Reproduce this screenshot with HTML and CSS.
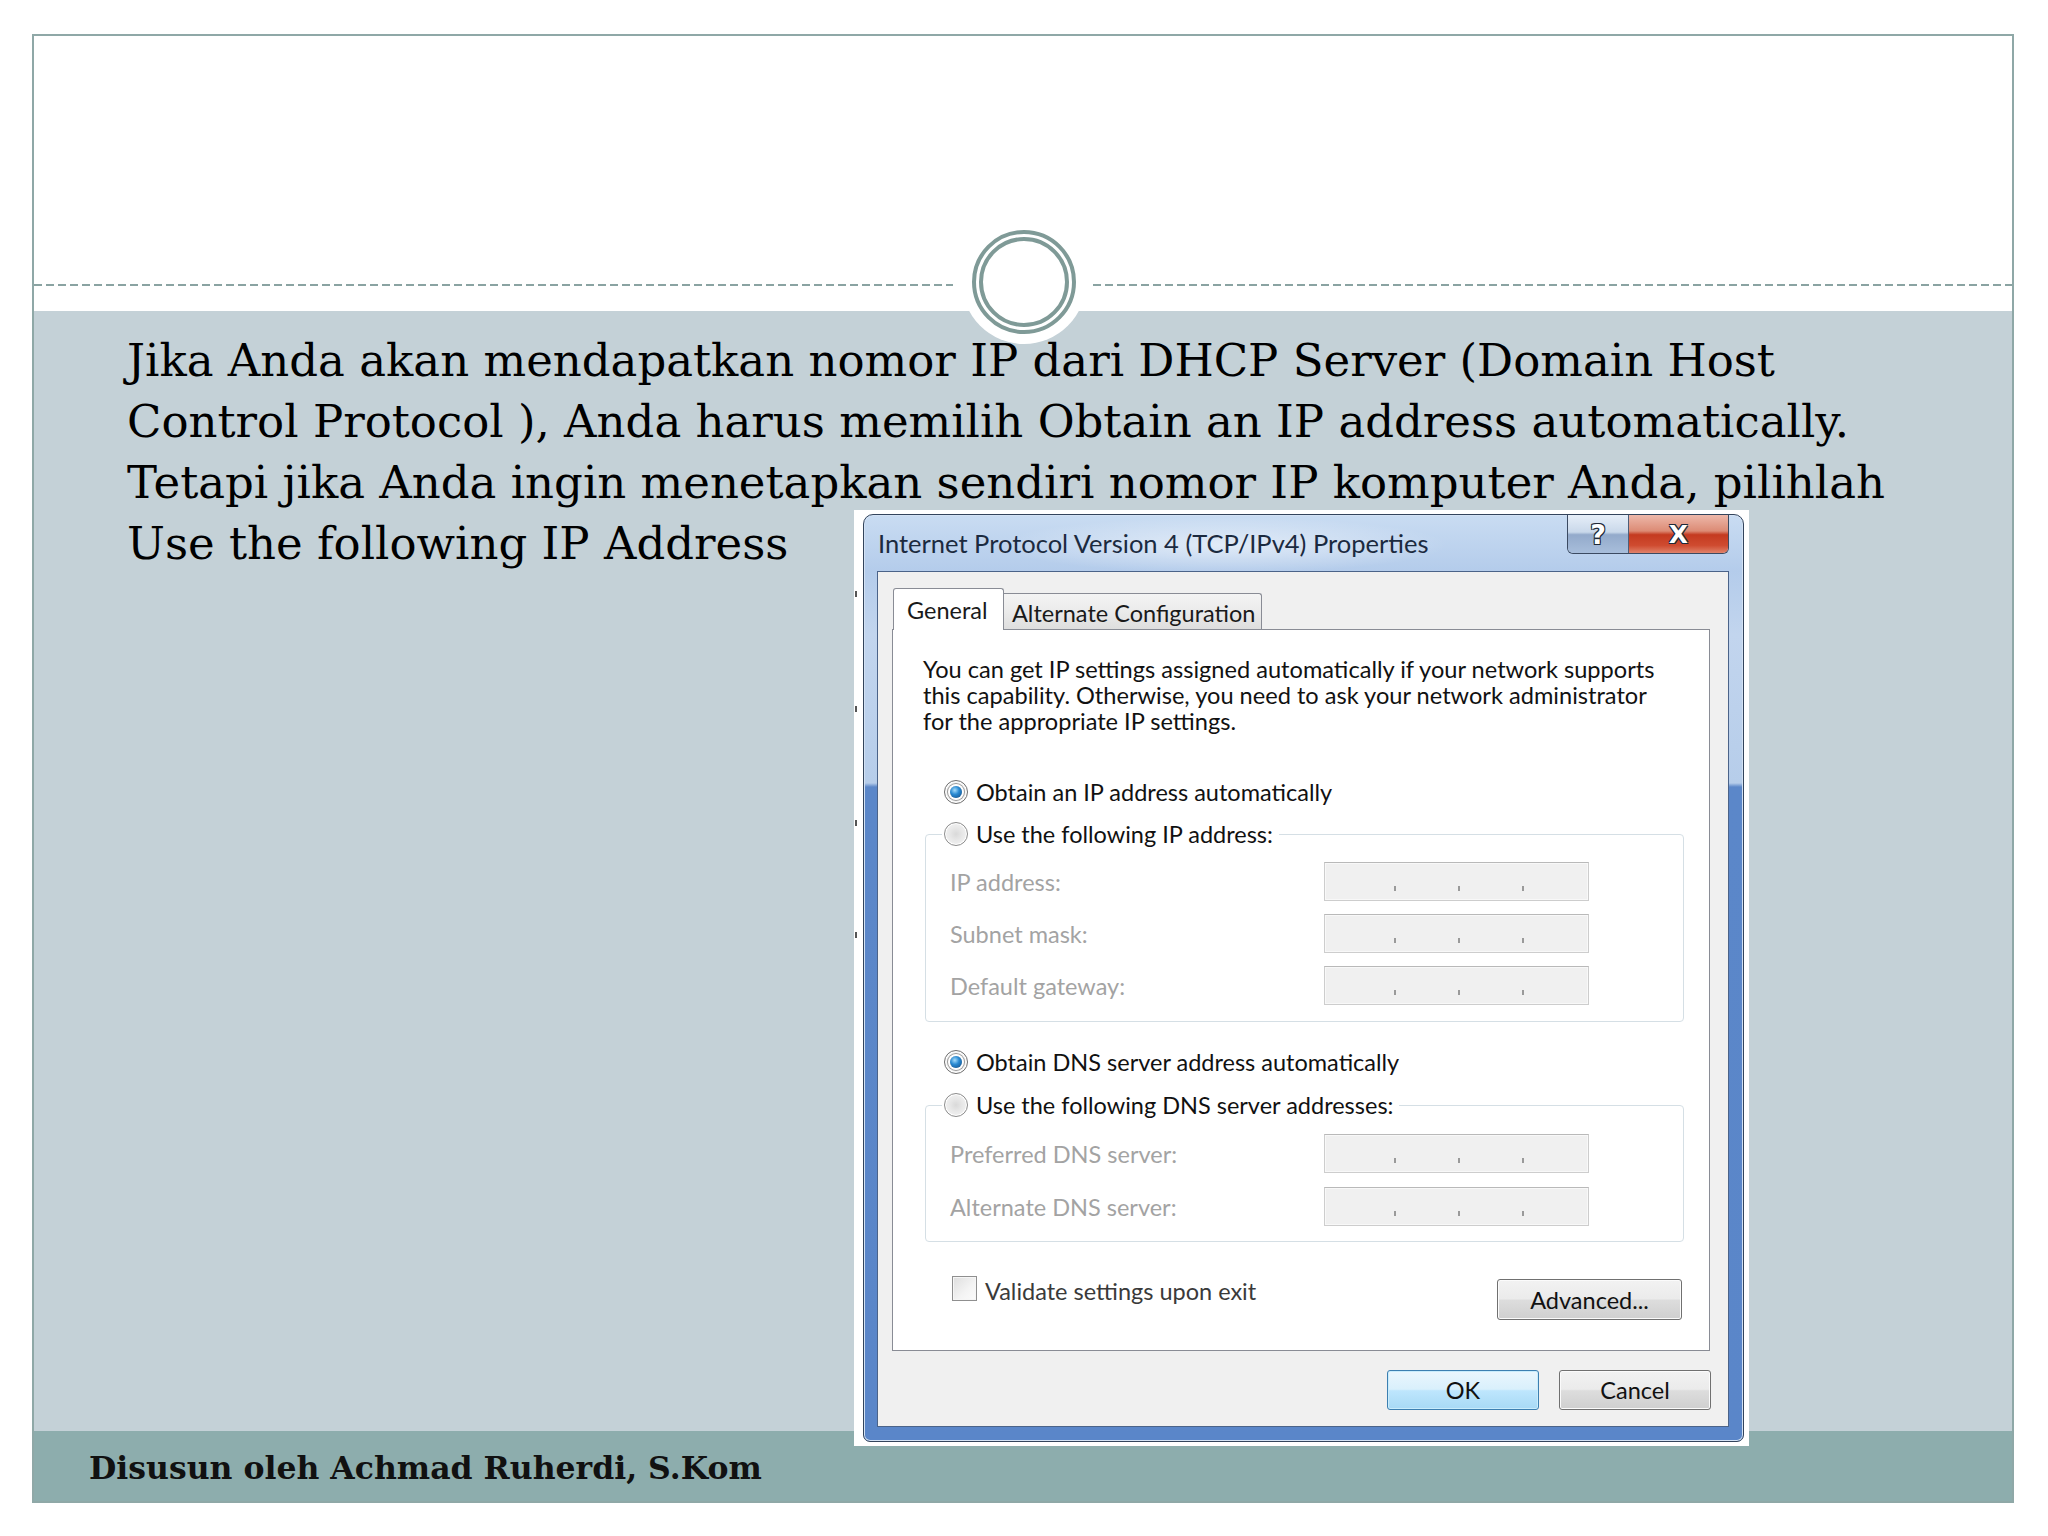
FILE: index.html
```html
<!DOCTYPE html>
<html>
<head>
<meta charset="utf-8">
<link rel="stylesheet" href="styles.css">
</head>
<body>
<div class="slide">
  <div class="header">
    <div class="dash-row"><div class="dash"></div><div class="dash"></div></div>
    <div class="badge"><div class="ring-outer"><div class="ring-inner"></div></div></div>
  </div>
  <div class="content">
    <p class="lead">Jika Anda akan mendapatkan nomor IP dari DHCP Server (Domain Host<br>Control Protocol ), Anda harus memilih Obtain an IP address automatically.<br>Tetapi jika Anda ingin menetapkan sendiri nomor IP komputer Anda, pilihlah<br>Use the following IP Address</p>

    <div class="shot">
      <span class="speck s1"></span><span class="speck s2"></span><span class="speck s3"></span><span class="speck s4"></span>
      <div class="window">
        <div class="titlebar">
          <div class="title">Internet Protocol Version 4 (TCP/IPv4) Properties</div>
          <div class="tb-btns">
            <div class="tb-help">?</div>
            <div class="tb-close">X</div>
          </div>
        </div>
        <div class="client">
          <div class="tabs">
            <div class="tab active">General</div>
            <div class="tab">Alternate Configuration</div>
          </div>
          <div class="panel">
            <p class="desc">You can get IP settings assigned automatically if your network supports<br>this capability. Otherwise, you need to ask your network administrator<br>for the appropriate IP settings.</p>

            <div class="opt first"><span class="radio on"></span><span>Obtain an IP address automatically</span></div>

            <fieldset class="group g1">
              <legend><span class="opt-in"><span class="radio"></span><span>Use the following IP address:</span></span></legend>
              <div class="rows">
                <div class="row"><span class="lbl">IP address:</span><span class="ipbox"><i></i><i></i><i></i></span></div>
                <div class="row"><span class="lbl">Subnet mask:</span><span class="ipbox"><i></i><i></i><i></i></span></div>
                <div class="row"><span class="lbl">Default gateway:</span><span class="ipbox"><i></i><i></i><i></i></span></div>
              </div>
            </fieldset>

            <div class="opt second"><span class="radio on"></span><span>Obtain DNS server address automatically</span></div>

            <fieldset class="group g2">
              <legend><span class="opt-in"><span class="radio"></span><span>Use the following DNS server addresses:</span></span></legend>
              <div class="rows">
                <div class="row"><span class="lbl">Preferred DNS server:</span><span class="ipbox"><i></i><i></i><i></i></span></div>
                <div class="row"><span class="lbl">Alternate DNS server:</span><span class="ipbox"><i></i><i></i><i></i></span></div>
              </div>
            </fieldset>

            <div class="bottom-row">
              <div class="check"><span class="box"></span><span>Validate settings upon exit</span></div>
              <div class="btn adv">Advanced...</div>
            </div>
          </div>
          <div class="actions">
            <div class="btn ok">OK</div>
            <div class="btn">Cancel</div>
          </div>
        </div>
      </div>
    </div>
  </div>
  <div class="footer">Disusun oleh Achmad Ruherdi, S.Kom</div>
</div>
</body>
</html>
```

FILE: styles.css
```css
html, body {
  margin: 0;
  padding: 0;
  background: #ffffff;
}

.slide {
  position: relative;
  margin: 34px 0 0 32px;
  width: 1982px;
  height: 1469px;
  border: 2px solid #8fa8a7;
  box-sizing: border-box;
  display: flex;
  flex-direction: column;
  background: #ffffff;
}

.header {
  position: relative;
  height: 275px;
  flex: none;
  z-index: 2;
}

.dash-row {
  display: flex;
  gap: 140px;
  padding-top: 248px;
}

.dash {
  flex: 1;
  height: 2px;
  background: repeating-linear-gradient(90deg, #8aa3a2 0 8px, transparent 8px 12px);
}

.badge {
  position: absolute;
  left: 928px;
  top: 184px;
  width: 124px;
  height: 124px;
  border-radius: 50%;
  background: #ffffff;
  display: flex;
  align-items: center;
  justify-content: center;
}

.ring-outer {
  width: 104px;
  height: 104px;
  border-radius: 50%;
  border: 4px solid #7f9a97;
  box-sizing: border-box;
  display: flex;
  align-items: center;
  justify-content: center;
}

.ring-inner {
  width: 90px;
  height: 90px;
  border-radius: 50%;
  border: 4px solid #7f9a97;
  box-sizing: border-box;
  background: #ffffff;
}

.content {
  position: relative;
  flex: 1;
  background: #c4d1d7;
  padding: 19px 0 0 93px;
}

.lead {
  margin: 0;
  font-family: "DejaVu Serif", "Liberation Serif", serif;
  font-size: 45px;
  line-height: 61px;
  color: #000000;
  white-space: nowrap;
}

.footer {
  flex: none;
  height: 70px;
  box-sizing: border-box;
  background: #8dadad;
  padding: 4px 0 0 55px;
  font-family: "DejaVu Serif", "Liberation Serif", serif;
  font-weight: bold;
  font-size: 31.5px;
  line-height: 66px;
  color: #111111;
}

/* ---------- dialog screenshot ---------- */
.shot {
  position: absolute;
  left: 820px;
  top: 199px;
  width: 895px;
  height: 936px;
  background: #ffffff;
  padding: 4px 5px 4px 9px;
  box-sizing: border-box;
  font-family: Lato, "Noto Sans", sans-serif;
  font-size: 23.5px;
  color: #1a1a1a;
}

.speck {
  position: absolute;
  left: 1px;
  width: 2px;
  height: 6px;
  background: #555555;
}

.s1 { top: 81px; }
.s2 { top: 196px; }
.s3 { top: 310px; }
.s4 { top: 422px; }

.window {
  height: 100%;
  box-sizing: border-box;
  border: 1px solid #33445c;
  border-radius: 10px 10px 7px 7px;
  display: flex;
  flex-direction: column;
  box-shadow: inset 0 0 0 1px #d3e2f4;
  background:
    radial-gradient(ellipse 320px 40px at 360px 30px, rgba(255,255,255,0.55), rgba(255,255,255,0) 70%),
    linear-gradient(180deg, #c9dcf2 0, #b4cceb 56px, #c2d5ee 120px, #b6cdea 268px, #5b87c9 272px, #5a86c9 100%);
}

.titlebar {
  height: 56px;
  flex: none;
  display: flex;
  align-items: flex-start;
  padding-left: 14px;
}

.title {
  flex: 1;
  line-height: 56px;
  font-size: 25.5px;
  color: #1b2a3f;
}

.tb-btns {
  display: flex;
  height: 38px;
  margin-right: 14px;
  border: 1px solid #3b4a61;
  border-top: none;
  border-radius: 0 0 6px 6px;
  overflow: hidden;
}

.tb-help, .tb-close {
  display: flex;
  align-items: center;
  justify-content: center;
  font-family: "DejaVu Sans", sans-serif;
  font-weight: bold;
  color: #ffffff;
  text-shadow: 0 0 1px #1f2a38, 1px 1px 0 #1f2a38, -1px -1px 0 #1f2a38, 1px -1px 0 #1f2a38, -1px 1px 0 #1f2a38;
}

.tb-help {
  width: 60px;
  font-size: 27px;
  border-right: 1px solid #4d5e78;
  background: linear-gradient(180deg, #e6eef8 0%, #c9d8ea 45%, #93aacb 52%, #a8bedb 100%);
}

.tb-close {
  width: 99px;
  font-size: 25px;
  background: linear-gradient(180deg, #edb8aa 0%, #dc8b75 42%, #c43a20 52%, #cf4b30 80%, #e0826a 100%);
}

.client {
  flex: 1;
  margin: 0 14px 14px 13px;
  border: 1px solid #4b6389;
  background: #f0f0f0;
  padding: 16px 0 0 14px;
  display: flex;
  flex-direction: column;
}

.tabs {
  display: flex;
  align-items: flex-end;
  height: 41px;
  margin-left: 1px;
}

.tab {
  height: 36px;
  box-sizing: border-box;
  border: 1px solid #898c95;
  border-bottom: none;
  border-left: none;
  padding: 0 0 0 8px;
  width: 258px;
  line-height: 38px;
  background: linear-gradient(180deg, #f4f4f4 0%, #ebebeb 50%, #dedede 100%);
  border-radius: 0 3px 0 0;
  white-space: nowrap;
}

.tab.active {
  position: relative;
  z-index: 1;
  height: 42px;
  width: 111px;
  margin-bottom: -1px;
  border-left: 1px solid #898c95;
  background: #ffffff;
  padding-left: 13px;
  line-height: 42px;
  border-radius: 3px 3px 0 0;
}

.panel {
  width: 818px;
  height: 722px;
  box-sizing: border-box;
  border: 1px solid #898c95;
  background: #ffffff;
  display: flex;
  flex-direction: column;
}

.desc {
  margin: 26px 0 0 30px;
  line-height: 26px;
  font-size: 23.6px;
  color: #111111;
  white-space: nowrap;
}

.opt, .opt-in {
  display: flex;
  align-items: center;
  gap: 8px;
  height: 26px;
  color: #111111;
  white-space: nowrap;
}

.opt {
  margin-left: 51px;
}

.opt.first { margin-top: 45px; }
.opt.second { margin-top: 27px; }

.radio {
  flex: none;
  width: 24px;
  height: 24px;
  box-sizing: border-box;
  border-radius: 50%;
  border: 1px solid #8c8c8c;
  background: radial-gradient(circle at 50% 50%, #d9d9d9 0, #e9e9e9 45%, #f7f7f7 100%);
  display: flex;
  align-items: center;
  justify-content: center;
  box-shadow: inset 0 0 0 1px #ffffff;
}

.radio.on {
  background: #f2f2f2;
  border-color: #6f6f6f;
}

.radio.on::after {
  content: "";
  width: 12px;
  height: 12px;
  border-radius: 50%;
  background: radial-gradient(circle at 40% 35%, #a6dcfb 0, #2b8bd3 40%, #0f467e 100%);
  box-shadow: 0 0 0 2px #ffffff, 0 0 0 3px #9a9a9a;
}

.group {
  margin: 16px 25px 0 32px;
  padding: 0 0 16px 24px;
  border: 1px solid #d5dfe5;
  border-radius: 4px;
  min-width: 0;
}

.g2 { margin-top: 17px; padding-bottom: 15px; }

.group legend {
  margin-left: -8px;
  padding: 0 6px 0 2px;
  background: #ffffff;
}

.rows {
  display: flex;
  flex-direction: column;
  gap: 13px;
  padding-top: 15px;
}

.g2 .rows { padding-top: 16px; gap: 14px; }

.row {
  display: flex;
  align-items: center;
  height: 39px;
}

.lbl {
  width: 374px;
  color: #a3a3a3;
  white-space: nowrap;
}

.ipbox {
  position: relative;
  width: 265px;
  height: 39px;
  box-sizing: border-box;
  border: 1px solid #cdcdcd;
  border-top-color: #b9b9b9;
  background: #f0f0f0;
  box-shadow: inset 0 0 0 1px #f8f8f8;
}

.ipbox i {
  position: absolute;
  top: 23px;
  width: 2px;
  height: 5px;
  background: #9a9a9a;
}

.ipbox i:nth-child(1) { left: 69px; }
.ipbox i:nth-child(2) { left: 133px; }
.ipbox i:nth-child(3) { left: 197px; }

.bottom-row {
  display: flex;
  justify-content: space-between;
  align-items: flex-start;
  margin: 34px 27px 0 59px;
}

.check {
  display: flex;
  align-items: flex-start;
  gap: 8px;
  color: #3a3a3a;
  line-height: 26px;
  white-space: nowrap;
}

.check .box {
  width: 25px;
  height: 25px;
  box-sizing: border-box;
  border: 1px solid #8f8f8f;
  background: linear-gradient(135deg, #dedede 0%, #f4f4f4 60%, #fbfbfb 100%);
  box-shadow: inset 0 0 0 1px #f6f6f6;
}

.check span:last-child { margin-top: 2px; }

.btn {
  width: 152px;
  height: 40px;
  box-sizing: border-box;
  border: 1px solid #707070;
  border-radius: 3px;
  display: flex;
  align-items: center;
  justify-content: center;
  color: #111111;
  background: linear-gradient(180deg, #f2f2f2 0%, #ebebeb 48%, #dddddd 52%, #cfcfcf 100%);
  box-shadow: inset 0 0 0 1px #fbfbfb;
}

.btn.adv {
  width: 185px;
  height: 41px;
  margin-top: 3px;
}

.actions {
  display: flex;
  justify-content: flex-end;
  gap: 20px;
  margin: 19px 17px 0 0;
}

.btn.ok {
  border-color: #3c7fb1;
  background: linear-gradient(180deg, #eaf6fd 0%, #d9f0fc 48%, #bee6fd 52%, #a7d9f5 100%);
  box-shadow: inset 0 0 0 1px #c8ecfc;
}
```
